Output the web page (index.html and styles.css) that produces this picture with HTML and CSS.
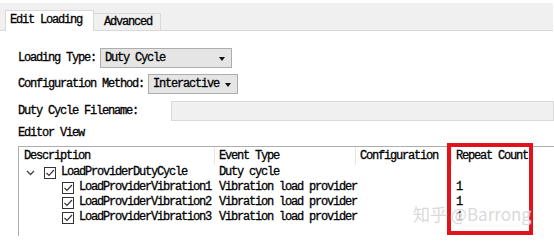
FILE: index.html
```html
<!DOCTYPE html>
<html>
<head>
<meta charset="utf-8">
<link rel="stylesheet" href="styles.css">
</head>
<body>
<div class="page">
  <div class="tabbar">
    <div class="tab active">Edit Loading</div>
    <div class="tab">Advanced</div>
  </div>
  <div class="form">
    <div class="row r1">
      <span class="label l1">Loading Type:</span>
      <div class="dropdown dd1"><span>Duty Cycle</span><i class="arrow"></i></div>
    </div>
    <div class="row r2">
      <span class="label l2">Configuration Method:</span>
      <div class="dropdown dd2"><span>Interactive</span><i class="arrow"></i></div>
    </div>
    <div class="row r3">
      <span class="label l3">Duty Cycle Filename:</span>
      <div class="input"></div>
    </div>
    <div class="section">Editor View</div>
    <div class="tree">
      <div class="thead">
        <div class="c c1">Description</div>
        <div class="c c2">Event Type</div>
        <div class="c c3">Configuration</div>
        <div class="c c4">Repeat Count</div>
      </div>
      <div class="trow">
        <div class="c c1 lvl0">
          <svg class="chev" width="9" height="6" viewBox="0 0 9 6"><polyline points="1,1 4.5,4.5 8,1" fill="none" stroke="#444" stroke-width="1.3"/></svg>
          <span class="cb"><svg width="10" height="10" viewBox="0 0 10 10"><polyline points="1.5,5 4,7.5 9,2" fill="none" stroke="#333" stroke-width="1.2"/></svg></span>
          <span>LoadProviderDutyCycle</span>
        </div>
        <div class="c c2">Duty cycle</div>
        <div class="c c3"></div>
        <div class="c c4"></div>
      </div>
      <div class="trow">
        <div class="c c1 lvl1">
          <span class="cb"><svg width="10" height="10" viewBox="0 0 10 10"><polyline points="1.5,5 4,7.5 9,2" fill="none" stroke="#333" stroke-width="1.2"/></svg></span>
          <span>LoadProviderVibration1</span>
        </div>
        <div class="c c2">Vibration load provider</div>
        <div class="c c3"></div>
        <div class="c c4">1</div>
      </div>
      <div class="trow">
        <div class="c c1 lvl1">
          <span class="cb"><svg width="10" height="10" viewBox="0 0 10 10"><polyline points="1.5,5 4,7.5 9,2" fill="none" stroke="#333" stroke-width="1.2"/></svg></span>
          <span>LoadProviderVibration2</span>
        </div>
        <div class="c c2">Vibration load provider</div>
        <div class="c c3"></div>
        <div class="c c4">1</div>
      </div>
      <div class="trow">
        <div class="c c1 lvl1">
          <span class="cb"><svg width="10" height="10" viewBox="0 0 10 10"><polyline points="1.5,5 4,7.5 9,2" fill="none" stroke="#333" stroke-width="1.2"/></svg></span>
          <span>LoadProviderVibration3</span>
        </div>
        <div class="c c2">Vibration load provider</div>
        <div class="c c3"></div>
        <div class="c c4">1</div>
      </div>
      <div class="highlight"></div>
      <div class="watermark">知乎 @Barrong</div>
    </div>
  </div>
</div>
</body>
</html>
```
FILE: styles.css
```css
* { box-sizing: border-box; }
html, body { margin: 0; padding: 0; background: #fff; }
body {
  width: 554px;
  height: 244px;
  overflow: hidden;
  font-family: "Liberation Mono", "Courier New", monospace;
  font-size: 12px;
  letter-spacing: -1.2px;
  color: #000;
  -webkit-text-stroke: 0.3px #000;
}
.page { width: 554px; }
.tabbar {
  margin-top: 3px;
  height: 28px;
  width: 553px;
  background: #f0f0f0;
  border-bottom: 1px solid #d9d9d9;
  display: flex;
  align-items: flex-end;
  padding-left: 5px;
}
.tab {
  height: 17px;
  width: 67px;
  border: 1px solid #d9d9d9;
  border-bottom: none;
  border-left: none;
  background: #f0f0f0;
  padding-left: 10px;
  line-height: 16px;
}
.tab.active {
  height: 21px;
  width: 89px;
  margin-bottom: -1px;
  background: #fff;
  border-left: 1px solid #d9d9d9;
  padding-left: 4px;
  line-height: 19px;
}
.form { padding-left: 18px; }
.row { display: flex; align-items: center; height: 20px; }
.r1 { margin-top: 17px; }
.r2 { margin-top: 6px; }
.r3 { margin-top: 7px; }
.label { line-height: 20px; }
.l1 { margin-right: 4px; }
.l2 { margin-right: 4px; }
.l3 { margin-right: 33px; }
.dropdown {
  position: relative;
  height: 20px;
  background: #e5e5e5;
  border: 1px solid #adadad;
  padding-left: 4px;
  line-height: 18px;
}
.dd1 { width: 132px; }
.dd2 { width: 90px; }
.arrow {
  position: absolute;
  right: 6px;
  top: 8px;
  width: 0;
  height: 0;
  border-left: 3.5px solid transparent;
  border-right: 3.5px solid transparent;
  border-top: 4px solid #111;
}
.input {
  flex: 1;
  height: 20px;
  background: #f0f0f0;
  border: 1px solid #d9d9d9;
}
.section { margin-top: 6px; height: 12px; line-height: 12px; }
.tree {
  position: relative;
  margin-top: 7px;
  height: 90px;
  width: 560px;
  border-top: 1px solid #adadad;
  border-left: 1px solid #adadad;
}
.thead, .trow { display: flex; }
.thead { height: 18px; line-height: 18px; }
.trow { height: 15px; line-height: 15px; }
.c { white-space: nowrap; }
.c1 { width: 195px; padding-left: 5px; display: flex; align-items: center; }
.c2 { width: 141px; padding-left: 4px; }
.c3 { width: 96px; padding-left: 4px; }
.c4 { flex: 1; padding-left: 4px; }
.thead .c2, .thead .c3, .thead .c4 { border-left: 1px solid #e5e5e5; }
.trow .c2, .trow .c3, .trow .c4 { border-left: 1px solid transparent; }
.lvl0 { padding-left: 7px; }
.lvl1 { padding-left: 43px; }
.chev { margin-right: 9px; }
.cb {
  width: 12px;
  height: 12px;
  border: 1px solid #333;
  background: #fff;
  display: inline-flex;
  align-items: center;
  justify-content: center;
  margin-right: 5px;
}
.highlight {
  position: absolute;
  left: 428px;
  top: -4px;
  width: 86px;
  height: 92px;
  border: 4px solid #e0121c;
}
.watermark {
  position: absolute;
  left: 394px;
  top: 57px;
  font-family: "Noto Sans CJK SC", sans-serif;
  font-size: 17px;
  letter-spacing: 0;
  line-height: 20px;
  color: rgba(200, 200, 200, 0.7);
  -webkit-text-stroke: 0;
  text-shadow: 0 0 1px #fff, 0 0 2px #fff;
}
```
